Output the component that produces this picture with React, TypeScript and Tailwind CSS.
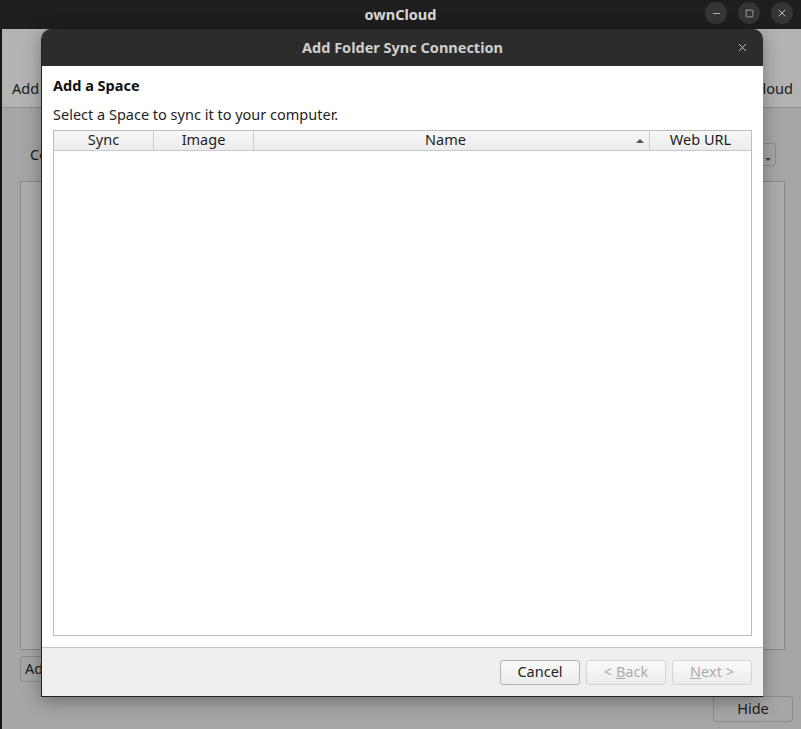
import { Minus, Square, X } from 'lucide-react';

const font = { fontFamily: '"Noto Sans", "Open Sans", sans-serif' };

function WinButton({ children }: { children: React.ReactNode }) {
  return (
    <div className="flex h-[22px] w-[22px] items-center justify-center rounded-full bg-[#353535] text-[#dcdcdc]">
      {children}
    </div>
  );
}

function DialogButton({ label, disabled }: { label: React.ReactNode; disabled?: boolean }) {
  return (
    <div
      className={`flex h-[25px] w-[80px] items-center justify-center rounded-[3px] border bg-gradient-to-b from-[#fafafa] to-[#ececec] text-[14.5px] ${
        disabled ? 'border-[#d4d4d4] text-[#ababab]' : 'border-[#b4b4b4] text-[#1e1e1e]'
      }`}
    >
      {label}
    </div>
  );
}

function Header({ label, className, arrow }: { label: string; className: string; arrow?: boolean }) {
  return (
    <div
      className={`relative flex h-full items-center justify-center border-r border-[#cfcfcf] text-[14.5px] text-[#1e1e1e] ${className}`}
    >
      {label}
      {arrow && (
        <span className="absolute right-[5px] top-[8px] h-0 w-0 border-x-[4px] border-b-[4px] border-x-transparent border-b-[#555]" />
      )}
    </div>
  );
}

function MainWindow() {
  return (
    <div className="flex h-full flex-col">
      <div className="relative flex h-[29px] shrink-0 items-center justify-center bg-[#1e1e1e]">
        <span className="text-[14.5px] font-bold text-[#d8d8d8]">ownCloud</span>
        <div className="absolute right-[8px] top-[2px] flex gap-[11px]">
          <WinButton>
            <Minus size={11} strokeWidth={1.6} />
          </WinButton>
          <WinButton>
            <Square size={9} strokeWidth={1.6} />
          </WinButton>
          <WinButton>
            <X size={12} strokeWidth={1.6} />
          </WinButton>
        </div>
      </div>
      <div className="flex flex-1">
        <div className="w-[2px] bg-[#151515]" />
        <div className="flex flex-1 flex-col bg-[#a6a6a6] text-[#1a1a1a]">
          <div className="flex h-[79px] items-end justify-between border-b border-[#8e8e8e] bg-[#b3b3b3] pb-[7px] pl-[10px] pr-[8px] text-[14.5px]">
            <span>Add</span>
            <span>ownCloud</span>
          </div>
          <div className="flex items-center justify-between pl-[28px] pr-[25px] pt-[35px] text-[14.5px]">
            <span>Co</span>
            <div className="relative h-[23px] w-[60px] rounded-[3px] border border-[#8c8c8c]">
              <span className="absolute bottom-[4px] right-[4px] h-0 w-0 border-x-[3px] border-t-[3px] border-x-transparent border-t-[#444]" />
            </div>
          </div>
          <div className="ml-[18px] mr-[16px] mt-[15px] h-[469px] border border-[#888] bg-[#adadad]" />
          <div className="ml-[18px] mt-[6px] flex h-[26px] w-[60px] items-center rounded-[3px] border border-[#8a8a8a] px-[4px] text-[14.5px]">
            Add
          </div>
          <div className="mr-[8px] mt-[14px] flex justify-end">
            <div className="flex h-[26px] w-[80px] items-center justify-center rounded-[3px] border border-[#8a8a8a] text-[14.5px]">
              Hide
            </div>
          </div>
        </div>
      </div>
    </div>
  );
}

function Dialog() {
  return (
    <div className="absolute left-[41px] top-[29px] flex h-[668px] w-[722px] flex-col overflow-hidden rounded-t-[10px] border-b border-l border-[#222] shadow-[0_4px_18px_rgba(0,0,0,0.35)]">
      <div className="relative flex h-[37px] shrink-0 items-center justify-center bg-[#2c2c2c]">
        <span className="text-[14.5px] font-bold text-[#cfcfcf]">Add Folder Sync Connection</span>
        <X size={13} strokeWidth={1.7} className="absolute right-[14px] top-[12px] text-[#cfcfcf]" />
      </div>
      <div className="flex flex-1 flex-col bg-white px-[11px] pb-[11px]">
        <div className="mt-[9px] text-[14.5px] font-bold text-[#111]">Add a Space</div>
        <div className="mt-[7px] text-[14.5px] text-[#1e1e1e]">Select a Space to sync it to your computer.</div>
        <div className="mt-[4px] flex flex-1 flex-col border border-[#bdbdbd]">
          <div className="flex h-[20px] border-b border-[#c9c9c9] bg-gradient-to-b from-[#f7f7f7] to-[#ececec]">
            <Header label="Sync" className="w-[100px]" />
            <Header label="Image" className="w-[100px]" />
            <Header label="Name" className="flex-1 pr-[12px]" arrow />
            <Header label="Web URL" className="w-[101px] border-r-0" />
          </div>
          <div className="flex-1 bg-white" />
        </div>
      </div>
      <div className="flex h-[49px] shrink-0 items-center justify-end gap-[6px] border-t border-[#c4c4c4] bg-[#efefef] pr-[11px]">
        <DialogButton label="Cancel" />
        <DialogButton
          disabled
          label={
            <span>
              &lt; <span className="underline">B</span>ack
            </span>
          }
        />
        <DialogButton
          disabled
          label={
            <span>
              <span className="underline">N</span>ext &gt;
            </span>
          }
        />
      </div>
    </div>
  );
}

export default function App() {
  return (
    <div className="relative h-[729px] w-[801px] overflow-hidden bg-[#111]" style={font}>
      <MainWindow />
      <Dialog />
    </div>
  );
}
